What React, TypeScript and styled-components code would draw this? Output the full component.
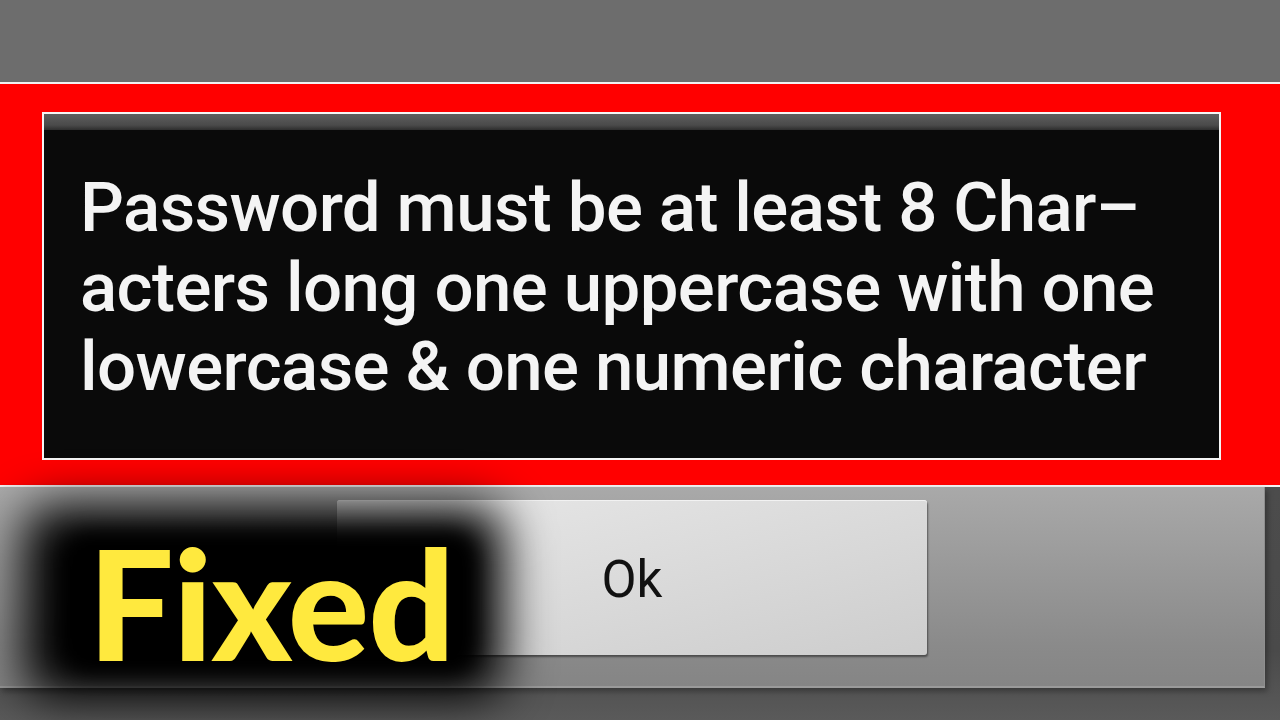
import React from "react";
import styled, { createGlobalStyle } from "styled-components";

const Global = createGlobalStyle`
  html, body { margin: 0; padding: 0; }
  body { background: #6b6b6b; width: 1280px; height: 720px; overflow: hidden; font-family: Roboto, "Liberation Sans", sans-serif; }
`;

const Page = styled.div`
  position: relative;
  width: 1280px;
  height: 720px;
  display: flex;
  flex-direction: column;
  background: #6b6b6b;
`;

const TopBar = styled.div`
  height: 82px;
  background: #6d6d6d;
  border-bottom: 2px solid #f2f2f2;
`;

const RedBand = styled.div`
  background: #ff0000;
  padding: 28px 59px 25px 42px;
  border-bottom: 2px solid #f4f4f4;
`;

const MessageBox = styled.div`
  height: 348px;
  border: 2px solid #f5f5f5;
  background: #0a0a0a;
  display: flex;
  flex-direction: column;
  box-sizing: border-box;
`;

const TitleStrip = styled.div`
  height: 16px;
  background: linear-gradient(#5e5e5e, #4a4a4a 70%, #2e2e2e);
`;

const Message = styled.p`
  margin: 0;
  padding: 38px 0 0 36px;
  color: #f4f4f4;
  font-family: Roboto, "Liberation Sans", sans-serif;
  font-weight: 500;
  font-size: 69px;
  line-height: 79.5px;
  letter-spacing: -0.6px;
  white-space: pre;
`;

const Bottom = styled.div`
  flex: 1;
  background: linear-gradient(#4c4c4c, #4a4a4a 70%, #5a5a5a);
  display: flex;
  flex-direction: column;
`;

const ButtonPanel = styled.div`
  width: 1265px;
  height: 201px;
  background: linear-gradient(#a9a9a9, #8a8a8a 80%, #858585);
  border-bottom: 2px solid #9a9a9a;
  border-right: 1px solid #8e8e8e;
  box-shadow: 2px 3px 6px rgba(0, 0, 0, 0.35);
  padding: 13px 0 0 337px;
  box-sizing: border-box;
`;

const OkButton = styled.button`
  width: 590px;
  height: 155px;
  border: none;
  border-radius: 3px;
  background: linear-gradient(165deg, #e8e8e8, #d8d8d8 60%, #cdcdcd);
  box-shadow: 1px 2px 2px rgba(0, 0, 0, 0.45), inset 0 1px 0 #f2f2f2;
  font-family: Roboto, "Liberation Sans", sans-serif;
  font-size: 51px;
  color: #111;
  padding: 4px 0 0 0;
  display: flex;
  align-items: center;
  justify-content: center;
  cursor: pointer;
`;

const FixedBadge = styled.div`
  position: absolute;
  left: 58px;
  top: 520px;
  padding: 0 30px;
  height: 160px;
  display: flex;
  align-items: center;

  &::before {
    content: "";
    position: absolute;
    inset: -14px -20px -18px -34px;
    background: #000;
    border-radius: 30px;
    filter: blur(24px);
  }
  &::after {
    content: "";
    position: absolute;
    inset: 14px 10px 8px 10px;
    background: #000;
    border-radius: 20px;
    filter: blur(10px);
  }
`;

const FixedText = styled.span`
  position: relative;
  z-index: 1;
  font-family: Lato, "Open Sans", sans-serif;
  font-weight: 900;
  font-size: 152px;
  line-height: 1;
  color: #ffe93e;
  letter-spacing: -1px;
  transform: translateY(2px);
`;

export default function App() {
  return (
    <>
      <Global />
      <Page>
        <TopBar />
        <RedBand>
          <MessageBox>
            <TitleStrip />
            <Message>
              {"Password must be at least 8 Char–\nacters long one uppercase with one\nlowercase & one numeric character"}
            </Message>
          </MessageBox>
        </RedBand>
        <Bottom>
          <ButtonPanel>
            <OkButton>Ok</OkButton>
          </ButtonPanel>
        </Bottom>
        <FixedBadge>
          <FixedText>Fixed</FixedText>
        </FixedBadge>
      </Page>
    </>
  );
}
